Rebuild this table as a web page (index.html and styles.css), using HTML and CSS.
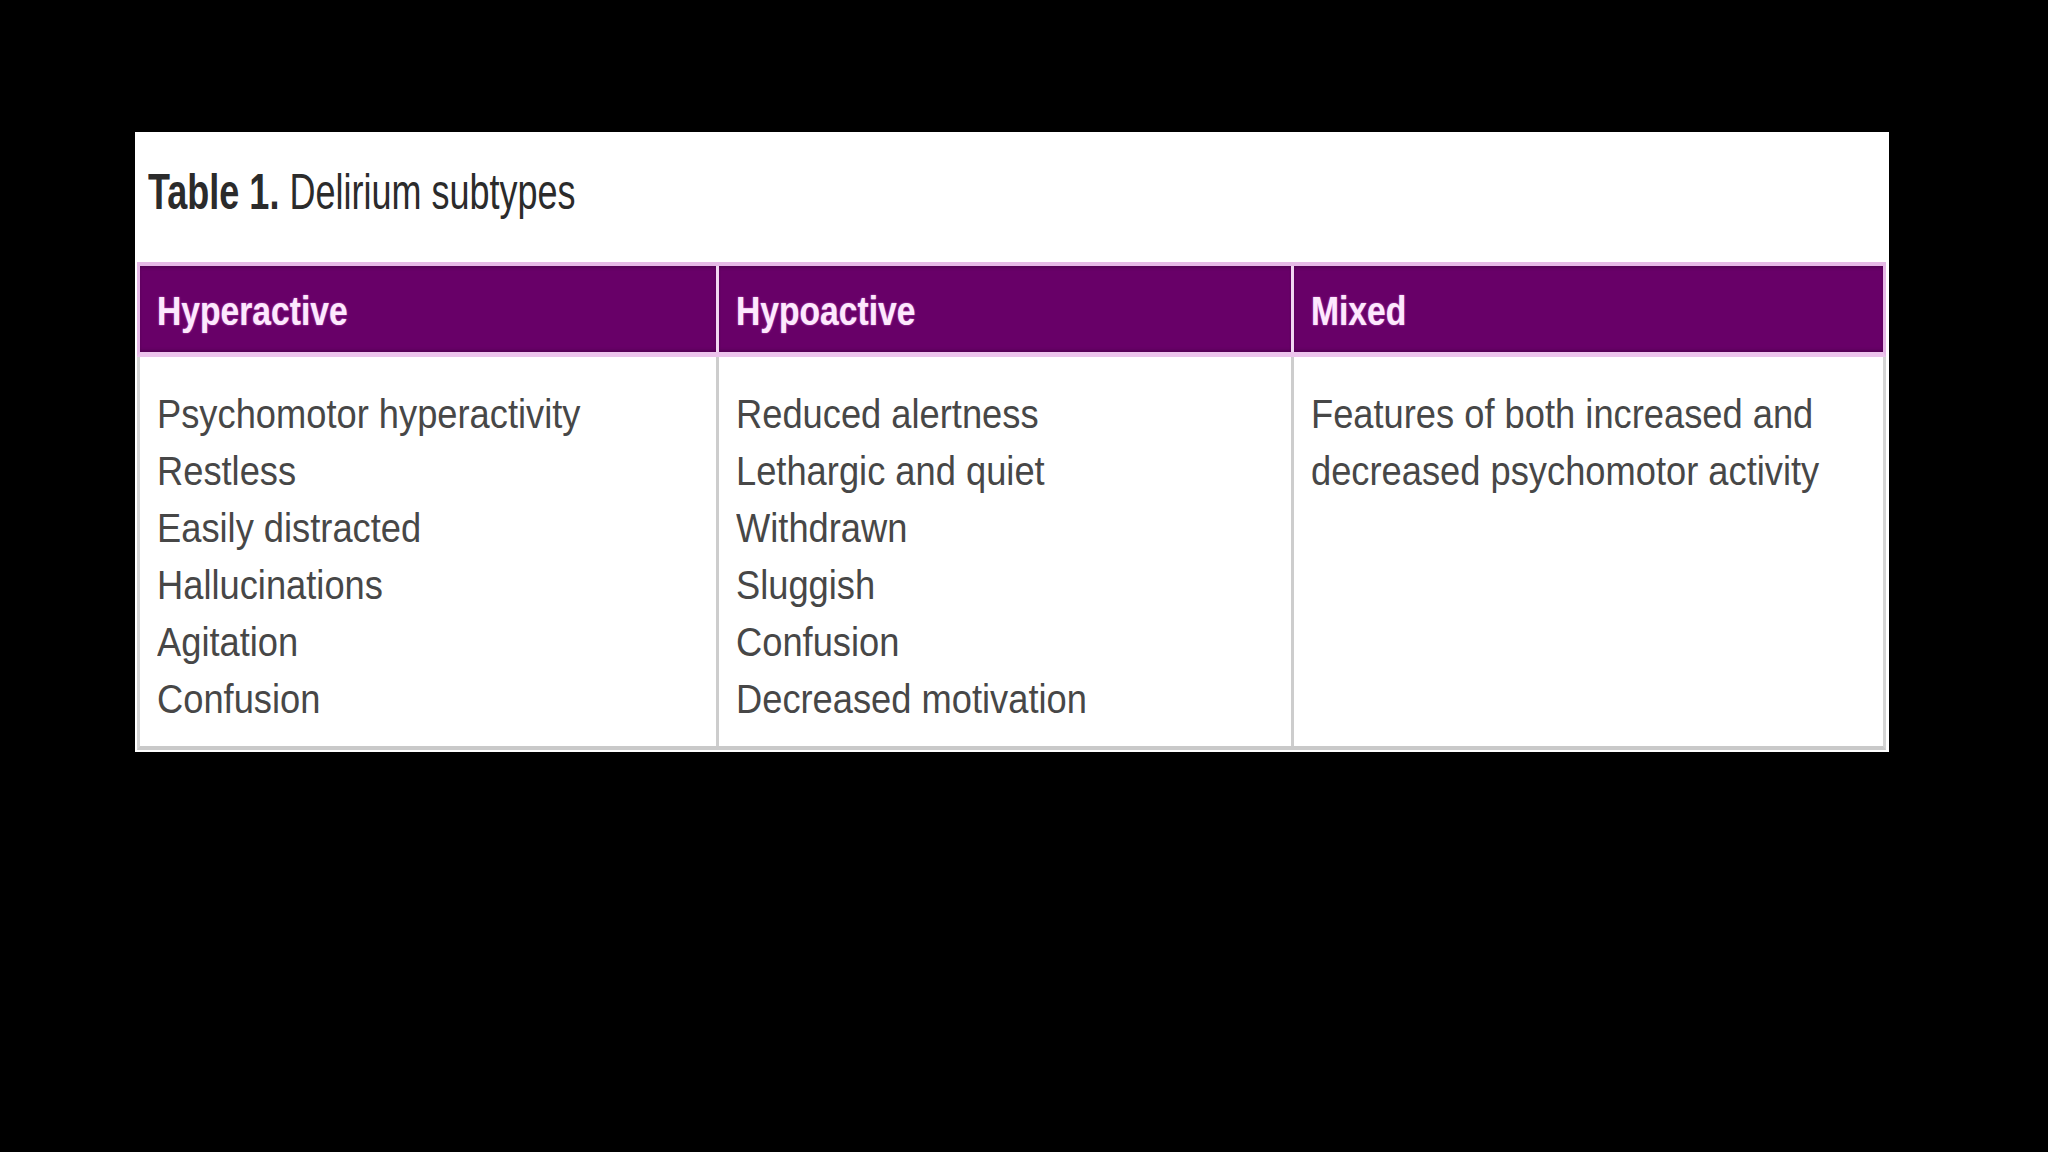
FILE: index.html
```html
<!DOCTYPE html>
<html lang="en">
<head>
<meta charset="utf-8">
<title>Table 1. Delirium subtypes</title>
<link rel="stylesheet" href="styles.css">
</head>
<body>
<div class="panel">
  <div class="title"><span class="title-text"><b>Table 1.</b> Delirium subtypes</span></div>
  <div class="table">
    <div class="row head">
      <div class="cell"><span class="ht">Hyperactive</span></div>
      <div class="cell"><span class="ht">Hypoactive</span></div>
      <div class="cell"><span class="ht">Mixed</span></div>
    </div>
    <div class="row body">
      <div class="cell">
        <div class="list">
          <div>Psychomotor hyperactivity</div>
          <div>Restless</div>
          <div>Easily distracted</div>
          <div>Hallucinations</div>
          <div>Agitation</div>
          <div>Confusion</div>
        </div>
      </div>
      <div class="cell">
        <div class="list">
          <div>Reduced alertness</div>
          <div>Lethargic and quiet</div>
          <div>Withdrawn</div>
          <div>Sluggish</div>
          <div>Confusion</div>
          <div>Decreased motivation</div>
        </div>
      </div>
      <div class="cell">
        <div class="list">
          <div>Features of both increased and</div>
          <div>decreased psychomotor activity</div>
        </div>
      </div>
    </div>
  </div>
</div>
</body>
</html>
```

FILE: styles.css
```css
html, body {
  margin: 0;
  padding: 0;
  background: #000;
}

body {
  width: 2048px;
  height: 1152px;
  overflow: hidden;
  font-family: "Liberation Sans", Arial, sans-serif;
}

.panel {
  margin-left: 135px;
  margin-top: 132px;
  width: 1754px;
  height: 620px;
  box-sizing: border-box;
  background: #fff;
  padding-top: 30px;
}

.title {
  height: 60px;
  line-height: 60px;
  font-size: 50px;
  color: #2b2b2b;
  padding-left: 13px;
  margin-bottom: 40px;
  white-space: nowrap;
}

.title-text {
  display: inline-block;
  transform: scaleX(0.72);
  transform-origin: 0 50%;
}

.title-text b {
  font-weight: bold;
}

.table {
  margin-left: 2px;
  width: 1749px;
}

.row {
  display: grid;
  grid-template-columns: 576px 575px 592px;
}

.head {
  border-top: 4px solid #e6b8e6;
  border-bottom: 5px solid #ecc4ec;
  border-left: 3px solid #e6b8e6;
  border-right: 3px solid #e6b8e6;
  background: #680068;
}

.head .cell {
  height: 86px;
  line-height: 86px;
  padding: 2px 0 0 17px;
  box-sizing: border-box;
  box-shadow: inset 0 3px 3px -1px rgba(70, 0, 70, 0.55), inset 0 -3px 3px -1px rgba(70, 0, 70, 0.55);
  font-size: 41px;
  font-weight: bold;
  color: #fde8fd;
  white-space: nowrap;
}

.head .cell + .cell {
  border-left: 3px solid #f2d6f2;
}

.ht {
  display: inline-block;
  transform: scaleX(0.82);
  transform-origin: 0 50%;
  text-shadow: 0 0 2px rgba(255, 160, 255, 0.7);
}

.body {
  height: 393px;
  box-sizing: border-box;
  border-left: 3px solid #d4d4d4;
  border-right: 3px solid #d4d4d4;
  border-bottom: 4px solid #c9c9c9;
  background: #fff;
}

.body .cell {
  padding: 29px 0 0 17px;
  box-sizing: border-box;
}

.body .cell + .cell {
  border-left: 3px solid #cdcdcd;
}

.list {
  font-size: 41px;
  line-height: 57px;
  color: #474747;
  white-space: nowrap;
  transform: scaleX(0.885);
  transform-origin: 0 0;
}
```
